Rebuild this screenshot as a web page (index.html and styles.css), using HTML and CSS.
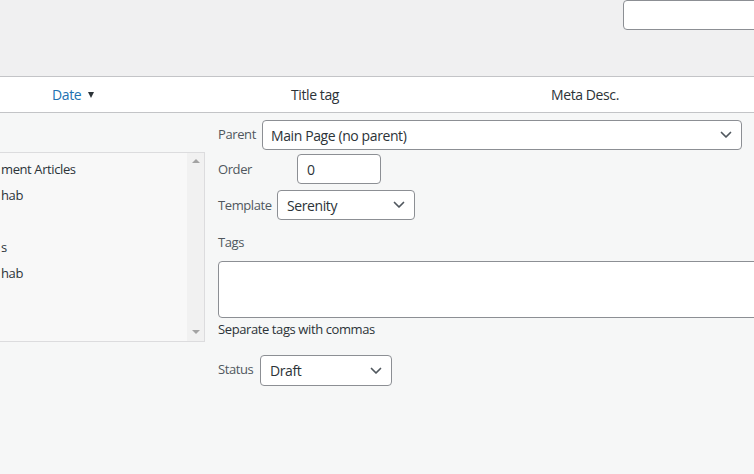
FILE: index.html
```html
<!DOCTYPE html>
<html lang="en">
<head>
<meta charset="utf-8">
<title>Quick Edit</title>
<link rel="stylesheet" href="styles.css">
</head>
<body>
<div class="page">
  <div class="top">
    <input class="search" type="search" aria-label="Search pages">
  </div>
  <div class="thead">
    <div class="th th-date"><a href="#" class="sort-link">Date</a><span class="sort-arrow"></span></div>
    <div class="th">Title tag</div>
    <div class="th">Meta Desc.</div>
  </div>
  <div class="editor">
    <div class="left-col">
      <div class="listbox">
        <ul class="list">
          <li>ment Articles</li>
          <li>hab</li>
          <li>&nbsp;</li>
          <li>s</li>
          <li>hab</li>
          <li>&nbsp;</li>
          <li>&nbsp;</li>
        </ul>
        <div class="scrollbar">
          <span class="arrow arrow-up"></span>
          <span class="arrow arrow-down"></span>
        </div>
      </div>
    </div>
    <div class="right-col">
      <div class="row row-parent">
        <label class="lbl lbl-parent">Parent</label>
        <div class="select select-parent"><span>Main Page (no parent)</span><svg class="chev" viewBox="0 0 12 8" width="12" height="8"><polyline points="1.5,1.5 6,6 10.5,1.5"/></svg></div>
      </div>
      <div class="row row-order">
        <label class="lbl lbl-order">Order</label>
        <div class="input input-order">0</div>
      </div>
      <div class="row row-template">
        <label class="lbl lbl-template">Template</label>
        <div class="select select-template"><span>Serenity</span><svg class="chev" viewBox="0 0 12 8" width="12" height="8"><polyline points="1.5,1.5 6,6 10.5,1.5"/></svg></div>
      </div>
      <div class="tags-label">Tags</div>
      <div class="textarea"></div>
      <div class="help">Separate tags with commas</div>
      <div class="row row-status">
        <label class="lbl lbl-status">Status</label>
        <div class="select select-status"><span>Draft</span><svg class="chev" viewBox="0 0 12 8" width="12" height="8"><polyline points="1.5,1.5 6,6 10.5,1.5"/></svg></div>
      </div>
    </div>
  </div>
</div>
</body>
</html>
```

FILE: styles.css
```css
* { box-sizing: border-box; }
html, body { margin: 0; padding: 0; }
body {
  width: 754px;
  height: 474px;
  overflow: hidden;
  background: #f6f7f7;
  font-family: "Open Sans", "Noto Sans", sans-serif;
  letter-spacing: -0.4px;
  color: #2c3338;
  font-size: 13px;
}
.page { width: 754px; overflow: hidden; }

.top {
  height: 76px;
  background: #f0f0f1;
  display: flex;
  padding-left: 623px;
}
.search {
  flex-shrink: 0;
  width: 170px;
  height: 30px;
  margin: 0;
  border: 1px solid #8c8f94;
  border-radius: 4px;
  background: #fff;
  font: inherit;
}

.thead {
  height: 37px;
  border-top: 1px solid #c3c4c7;
  border-bottom: 1px solid #c3c4c7;
  background: #fff;
  display: grid;
  grid-template-columns: 239px 260px 1fr;
  padding-left: 52px;
  align-items: center;
  font-size: 14px;
  color: #2c3338;
}
.th-date { display: flex; align-items: center; gap: 7px; }
.sort-link { color: #2271b1; text-decoration: none; }
.sort-arrow {
  width: 0; height: 0;
  border-left: 3.5px solid transparent;
  border-right: 3.5px solid transparent;
  border-top: 6px solid #2c3338;
  margin-top: 1px;
}

.editor { display: flex; }
.left-col { width: 206px; margin-left: -1px; flex-shrink: 0; }
.listbox {
  margin-top: 39px;
  height: 190px;
  border: 1px solid #dcdcde;
  background: #f8f8f8;
  display: flex;
}
.list {
  flex: 1;
  margin: 0;
  padding: 3px 0 0 1px;
  list-style: none;
  font-size: 13px;
  line-height: 26px;
  color: #2c3338;
  overflow: hidden;
}
.scrollbar {
  width: 17px;
  background: #f1f1f1;
  position: relative;
}
.arrow {
  position: absolute;
  left: 5px;
  width: 0; height: 0;
  border-left: 4px solid transparent;
  border-right: 4px solid transparent;
}
.arrow-up { top: 6px; border-bottom: 4px solid #a3a3a3; }
.arrow-down { bottom: 7px; border-top: 4px solid #a3a3a3; }

.right-col {
  margin-left: 13px;
  padding-top: 7px;
  flex: 1;
  min-width: 0;
}
.row { display: flex; align-items: center; }
.row-order { margin-top: 4px; }
.row-template { margin-top: 6px; }
.row-status { margin-top: 17px; }

.lbl { color: #50575e; font-size: 13px; line-height: 18px; margin-top: -1px; flex-shrink: 0; }
.lbl-parent { width: 44px; margin-top: -2px; }
.lbl-order { width: 79px; }
.lbl-template { width: 59px; }
.lbl-status { width: 42px; margin-top: -3px; }

.select, .input {
  height: 30px;
  border: 1px solid #8c8f94;
  border-radius: 4px;
  background: #fff;
  font-size: 14px;
  color: #2c3338;
  display: flex;
  align-items: center;
  justify-content: space-between;
  padding: 0 9px 0 9px;
  flex-shrink: 0;
}
.select-parent { width: 480px; padding-left: 8px; }
.select-template { width: 138px; }
.select-status { width: 132px; height: 31px; }
.input-order { width: 84px; }
.chev { fill: none; stroke: #50575e; stroke-width: 1.7; stroke-linecap: round; stroke-linejoin: round; }

.tags-label { margin-top: 13px; line-height: 18px; color: #50575e; }
.textarea {
  margin-top: 10px;
  width: 600px;
  height: 57px;
  border: 1px solid #8c8f94;
  border-radius: 4px;
  background: #fff;
}
.help { margin-top: 2px; line-height: 18px; color: #2c3338; }
```
